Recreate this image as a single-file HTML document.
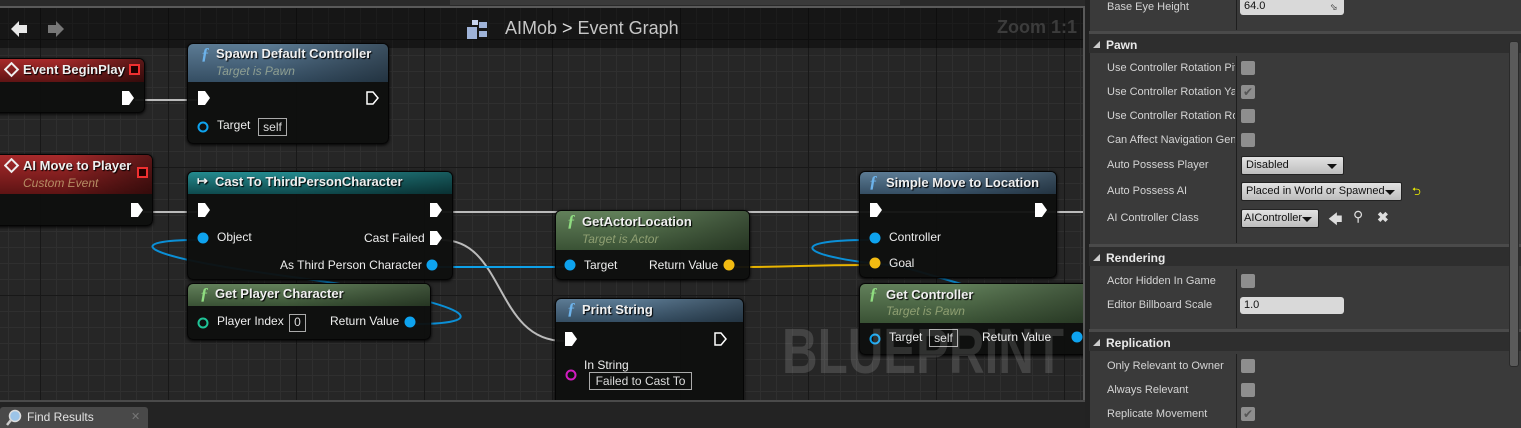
<!DOCTYPE html>
<html><head><meta charset="utf-8"><style>
*{margin:0;padding:0;box-sizing:border-box}
body{width:1521px;height:428px;overflow:hidden;background:#232323;font-family:"Liberation Sans",sans-serif;position:relative}
#graph{position:absolute;left:0;top:6px;width:1085px;height:396px;overflow:hidden;border-top:2px solid #5a5a5a;border-right:2px solid #5a5a5a;border-bottom:2px solid #4a4a4a;
background-color:#262626;
background-image:linear-gradient(90deg,#181818 1px,transparent 1px),linear-gradient(0deg,#181818 1px,transparent 1px),linear-gradient(90deg,#2f2f2f 1px,transparent 1px),linear-gradient(0deg,#2f2f2f 1px,transparent 1px);
background-size:128px 128px,128px 128px,16px 16px,16px 16px;background-position:40px 32px,40px 32px,8px 0,8px 0}
#clip{position:absolute;left:0;top:0;width:1083px;height:400px;overflow:hidden}
.a{position:absolute;white-space:nowrap}
.node{position:absolute;background:rgba(14,15,14,.95);border:1px solid #050505;border-radius:6px;box-shadow:0 1px 3px #000;overflow:hidden}
.hdr{position:absolute;left:0;right:0;top:0}
.blue{background:linear-gradient(90deg,rgba(0,0,0,0) 40%,rgba(0,0,0,.35)),linear-gradient(180deg,#5c7b94,#354e63)}
.green{background:linear-gradient(90deg,rgba(0,0,0,0) 40%,rgba(0,0,0,.35)),linear-gradient(180deg,#62805a,#3a5235)}
.teal{background:linear-gradient(90deg,rgba(0,0,0,0) 40%,rgba(0,0,0,.35)),linear-gradient(180deg,#248a8e,#0f4a4d)}
.red{background:linear-gradient(90deg,rgba(0,0,0,0) 45%,rgba(0,0,0,.45)),linear-gradient(180deg,#a82a2b,#5e1414)}
.t{font-weight:bold;font-size:13px;color:#f0f0f0;text-shadow:1px 1px 1px #000}
.s{font-style:italic;font-size:12px}
.l{font-size:12px;color:#eee}
.f{font-family:"Liberation Serif",serif;font-style:italic;font-weight:bold;font-size:17px}
.box{position:absolute;border:1px solid #aaa;font-size:12px;color:#ddd;text-align:center;line-height:15px}
.lab{position:absolute;left:22px;font-size:11px;color:#d4d4d4;width:128px;overflow:hidden;white-space:nowrap}
.cb{position:absolute;left:156px;width:14px;height:14px;background:#8e8e8e;border-radius:2px}
.sec{position:absolute;left:4px;right:0;height:22px;background:#2e2e2e;font-weight:bold;font-size:12px;color:#e8e8e8;padding-left:17px;line-height:22px;border-top:3px solid #4a4a4a}
.sec:before{content:"";position:absolute;left:4px;top:7px;border-left:7px solid transparent;border-bottom:7px solid #ccc}
.dd{position:absolute;background:linear-gradient(#e2e2e2,#bdbdbd);border:1px solid #222;border-radius:2px;font-size:11px;color:#111;padding-left:4px;line-height:17px}
.dd:after{content:"";position:absolute;right:6px;top:7px;border-left:5px solid transparent;border-right:5px solid transparent;border-top:5px solid #111}
</style></head><body>
<div style="position:absolute;left:0;top:0;width:1085px;height:6px;background:#2a2a2a"></div>
<div style="position:absolute;left:450px;top:0;width:450px;height:5px;background:#3a3a3a"></div>
<div id="graph">
 <div style="position:absolute;left:0;top:0;right:0;height:40px;background:rgba(0,0,0,.4)"></div>
 <svg class="a" style="left:8px;top:10px" width="60" height="22"><polygon points="3,11 11,3 11,7 19,7 19,15 11,15 11,19" fill="#e8e8e8"/><polygon points="60,11 52,3 52,7 44,7 44,15 52,15 52,19" fill="#777" transform="translate(-4,0)"/></svg>
 <svg class="a" style="left:467px;top:12px" width="22" height="20"><rect x="0" y="7" width="10" height="12" fill="#9fb3d8"/><rect x="12" y="2" width="8" height="6" fill="#9fb3d8"/><rect x="12" y="11" width="8" height="6" fill="#9fb3d8"/><rect x="5" y="0" width="6" height="5" fill="#c8d4ee"/></svg>
 <div class="a" style="left:505px;top:10px;font-size:18px;color:#c6c6c6">AIMob <span style="color:#ddd">&gt;</span> Event Graph</div>
 <div class="a" style="left:997px;top:9px;font-size:18px;font-weight:bold;color:#3c3c3c">Zoom 1:1</div>
 <svg class="a" style="left:0;top:-6px" width="1085" height="402">
  <g fill="none" stroke-width="2">
   <path d="M135 98 H197" stroke="#bbb"/>
   <path d="M143 210 H197" stroke="#bbb"/>
   <path d="M442 210 H1084" stroke="#bbb"/>
   <path d="M442 238 C505 238 495 339 564 339" stroke="#bbb"/>
   <path d="M437 265 H565" stroke="#0ea0e8"/>
   <path d="M414 322 C500 322 470 300 300 276 C120 252 130 238 197 238" stroke="#0b8fd6"/>
   <path d="M869 238 C780 238 800 256 900 264 L1084 318" stroke="#0b8fd6"/>
   <path d="M735 265 C800 265 800 263 869 263" stroke="#e8b400"/>
  </g>
 </svg>
</div>
<div id="clip">
<div class="node" style="left:-10px;top:58px;width:155px;height:55px"><div class="hdr red" style="height:23px"></div></div>
<svg class="a" style="left:4px;top:62px" width="16" height="16"><rect x="3" y="3" width="9" height="9" transform="rotate(45 7.5 7.5)" fill="none" stroke="#eee" stroke-width="2"/></svg>
<div class="a t" style="left:23px;top:62px">Event BeginPlay</div>
<div class="a" style="left:129px;top:64px;width:11px;height:11px;border:2px solid #f03030;background:#200"></div>

<div class="node" style="left:187px;top:43px;width:202px;height:101px"><div class="hdr blue" style="height:38px"></div></div>
<div class="a f" style="left:201px;top:44px;color:#6cb2ea">ƒ</div>
<div class="a t" style="left:216px;top:46px">Spawn Default Controller</div>
<div class="a s" style="left:216px;top:64px;color:#8f9f92">Target is Pawn</div>
<div class="a l" style="left:217px;top:118px">Target</div>
<div class="box" style="left:258px;top:118px;width:29px;height:18px;line-height:16px">self</div>

<div class="node" style="left:-10px;top:154px;width:163px;height:72px"><div class="hdr red" style="height:39px"></div></div>
<svg class="a" style="left:4px;top:158px" width="16" height="16"><rect x="3" y="3" width="9" height="9" transform="rotate(45 7.5 7.5)" fill="none" stroke="#eee" stroke-width="2"/></svg>
<div class="a t" style="left:23px;top:158px">AI Move to Player</div>
<div class="a s" style="left:23px;top:176px;color:#b58d64">Custom Event</div>
<div class="a" style="left:137px;top:167px;width:11px;height:11px;border:2px solid #f03030;background:#200"></div>

<div class="node" style="left:187px;top:171px;width:266px;height:109px"><div class="hdr teal" style="height:22px"></div></div>
<div class="a t" style="left:197px;top:173px">↦</div>
<div class="a t" style="left:215px;top:174px">Cast To ThirdPersonCharacter</div>
<div class="a l" style="left:217px;top:230px">Object</div>
<div class="a l" style="left:364px;top:231px">Cast Failed</div>
<div class="a l" style="left:280px;top:258px">As Third Person Character</div>

<div class="node" style="left:187px;top:283px;width:244px;height:57px"><div class="hdr green" style="height:22px"></div></div>
<div class="a f" style="left:200px;top:284px;color:#8fdc80">ƒ</div>
<div class="a t" style="left:215px;top:286px">Get Player Character</div>
<div class="a l" style="left:217px;top:314px">Player Index</div>
<div class="box" style="left:289px;top:314px;width:17px;height:18px">0</div>
<div class="a l" style="left:330px;top:314px">Return Value</div>

<div class="node" style="left:555px;top:210px;width:195px;height:70px"><div class="hdr green" style="height:39px"></div></div>
<div class="a f" style="left:567px;top:211px;color:#8fdc80">ƒ</div>
<div class="a t" style="left:582px;top:214px">GetActorLocation</div>
<div class="a s" style="left:582px;top:232px;color:#8f9f72">Target is Actor</div>
<div class="a l" style="left:584px;top:258px">Target</div>
<div class="a l" style="left:649px;top:258px">Return Value</div>

<div class="node" style="left:555px;top:298px;width:189px;height:130px"><div class="hdr blue" style="height:23px"></div></div>
<div class="a f" style="left:567px;top:299px;color:#6cb2ea">ƒ</div>
<div class="a t" style="left:582px;top:302px">Print String</div>
<div class="a l" style="left:584px;top:358px">In String</div>
<div class="box" style="left:589px;top:372px;width:103px;height:18px;line-height:16px">Failed to Cast To</div>

<div class="node" style="left:859px;top:171px;width:198px;height:107px"><div class="hdr blue" style="height:22px"></div></div>
<div class="a f" style="left:869px;top:172px;color:#6cb2ea">ƒ</div>
<div class="a t" style="left:886px;top:175px">Simple Move to Location</div>
<div class="a l" style="left:889px;top:230px">Controller</div>
<div class="a l" style="left:889px;top:256px">Goal</div>

<div class="node" style="left:859px;top:283px;width:240px;height:72px"><div class="hdr green" style="height:39px"></div></div>
<div class="a f" style="left:869px;top:284px;color:#8fdc80">ƒ</div>
<div class="a t" style="left:886px;top:287px">Get Controller</div>
<div class="a s" style="left:886px;top:304px;color:#8f9f72">Target is Pawn</div>
<div class="a l" style="left:889px;top:330px">Target</div>
<div class="box" style="left:929px;top:329px;width:29px;height:18px;line-height:16px">self</div>
<div class="a l" style="left:982px;top:330px">Return Value</div>

<svg class="a" style="left:0;top:0" width="1085" height="428">
 <g fill="#fff">
  <polygon points="122,91 129,91 134,98 129,105 122,105"/>
  <polygon points="198,91 205,91 210,98 205,105 198,105"/>
  <polygon points="131,203 138,203 143,210 138,217 131,217"/>
  <polygon points="198,203 205,203 210,210 205,217 198,217"/>
  <polygon points="430,203 437,203 442,210 437,217 430,217"/>
  <polygon points="430,231 437,231 442,238 437,245 430,245"/>
  <polygon points="565,332 572,332 577,339 572,346 565,346"/>
  <polygon points="870,203 877,203 882,210 877,217 870,217"/>
  <polygon points="1035,203 1042,203 1047,210 1042,217 1035,217"/>
 </g>
 <g fill="none" stroke="#fff" stroke-width="1.5">
  <polygon points="367,92 373,92 378,98 373,104 367,104"/>
  <polygon points="715,333 721,333 726,339 721,345 715,345"/>
 </g>
 <g fill="#0ea3ef">
  <circle cx="203" cy="238" r="5.5"/><circle cx="432" cy="265" r="5.5"/><circle cx="410" cy="322" r="5.5"/>
  <circle cx="570" cy="265" r="5.5"/><circle cx="875" cy="238" r="5.5"/><circle cx="1077" cy="337" r="5.5"/>
 </g>
 <circle cx="729" cy="265" r="5.5" fill="#f2bb12"/><circle cx="875" cy="263" r="5.5" fill="#f2bb12"/>
 <g fill="none" stroke-width="2">
  <circle cx="203" cy="127" r="4.5" stroke="#0ea3ef"/>
  <circle cx="875" cy="339" r="4.5" stroke="#0ea3ef"/>
  <circle cx="203" cy="323" r="4.5" stroke="#1fc497"/>
  <circle cx="571" cy="375" r="4.5" stroke="#d21cc0"/>
 </g>
</svg>
<div class="a" style="left:782px;top:314px;font-size:64px;font-weight:bold;color:rgba(255,255,255,.14);transform:scaleX(.77);transform-origin:0 0">BLUEPRINT</div>
</div>
<div class="a" style="left:0;top:400px;width:1085px;height:2px;background:#4a4a4a"></div>

<div class="a" style="left:0;top:407px;width:148px;height:21px;background:#494949;border-radius:3px 3px 0 0"></div>
<svg class="a" style="left:6px;top:409px" width="16" height="18"><circle cx="9" cy="7" r="5.5" fill="#9cc4e8" stroke="#ddd" stroke-width="1.5"/><line x1="5" y1="11" x2="1" y2="16" stroke="#ccc" stroke-width="2.5"/></svg>
<div class="a" style="left:27px;top:410px;font-size:12px;color:#e2e2e2">Find Results</div>
<div class="a" style="left:131px;top:410px;font-size:11px;color:#777">✕</div>

<div class="a" style="left:1085px;top:0;width:436px;height:428px;background:#3a3a3a">
 <div class="a" style="left:0;top:0;width:5px;height:428px;background:#222"></div>
 <div class="a" style="left:151px;top:0;width:1px;height:30px;background:#1e1e1e"></div>
 <div class="lab" style="top:1px">Base Eye Height</div>
 <div class="a" style="left:155px;top:0;width:104px;height:15px;background:#d9d9d9;border-radius:0 0 3px 3px;font-size:11px;color:#111;padding-left:4px">64.0</div>
 <div class="a" style="left:245px;top:2px;font-size:9px;color:#111">⬂</div>
 <div class="sec" style="top:31px">Pawn</div>
 <div class="a" style="left:151px;top:56px;width:1px;height:187px;background:#1e1e1e"></div>
 <div class="lab" style="top:62px">Use Controller Rotation Pitch</div><div class="cb" style="top:61px"></div>
 <div class="lab" style="top:86px">Use Controller Rotation Yaw</div><div class="cb" style="top:85px;color:#555;font-size:12px;text-align:center;line-height:14px">✔</div>
 <div class="lab" style="top:110px">Use Controller Rotation Roll</div><div class="cb" style="top:109px"></div>
 <div class="lab" style="top:134px">Can Affect Navigation Generation</div><div class="cb" style="top:133px"></div>
 <div class="lab" style="top:159px">Auto Possess Player</div><div class="dd" style="left:156px;top:156px;width:103px;height:19px">Disabled</div>
 <div class="lab" style="top:185px">Auto Possess AI</div><div class="dd" style="left:156px;top:182px;width:161px;height:19px">Placed in World or Spawned</div>
 <div class="a" style="left:327px;top:183px;font-size:11px;color:#ee0">⮌</div>
 <div class="lab" style="top:212px">AI Controller Class</div><div class="dd" style="left:156px;top:209px;width:78px;height:19px;padding-left:2px">AIController</div>
 <div class="a" style="left:243px;top:209px;font-size:14px;color:#ddd">🡄</div>
 <div class="a" style="left:268px;top:208px;font-size:14px;color:#ddd">⚲</div>
 <div class="a" style="left:292px;top:209px;font-size:14px;font-weight:bold;color:#ddd">✖</div>
 <div class="sec" style="top:244px">Rendering</div>
 <div class="a" style="left:151px;top:269px;width:1px;height:59px;background:#1e1e1e"></div>
 <div class="lab" style="top:275px">Actor Hidden In Game</div><div class="cb" style="top:274px"></div>
 <div class="lab" style="top:299px">Editor Billboard Scale</div>
 <div class="a" style="left:155px;top:297px;width:104px;height:17px;background:#d9d9d9;border-radius:3px;font-size:11px;color:#111;padding-left:4px;line-height:17px">1.0</div>
 <div class="sec" style="top:329px">Replication</div>
 <div class="a" style="left:151px;top:354px;width:1px;height:74px;background:#1e1e1e"></div>
 <div class="lab" style="top:360px">Only Relevant to Owner</div><div class="cb" style="top:359px"></div>
 <div class="lab" style="top:384px">Always Relevant</div><div class="cb" style="top:383px"></div>
 <div class="lab" style="top:408px">Replicate Movement</div><div class="cb" style="top:407px;color:#555;font-size:12px;text-align:center;line-height:14px">✔</div>
 <div class="a" style="left:424px;top:41px;width:10px;height:326px;background:#5a5a5a;border-radius:3px;border:1px solid #2a2a2a"></div>
</div>
</body></html>
